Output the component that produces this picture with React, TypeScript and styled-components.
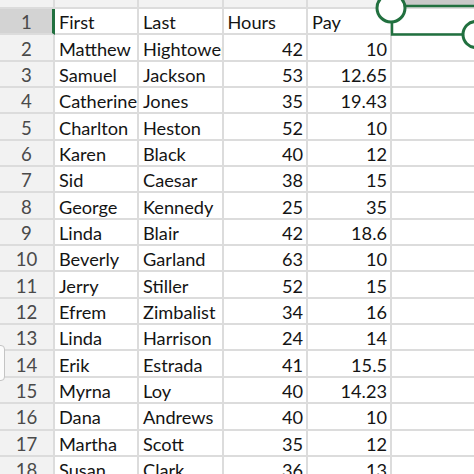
import React from "react";
import styled, { createGlobalStyle } from "styled-components";

const Global = createGlobalStyle`
  html, body { margin: 0; padding: 0; background: #ffffff; overflow: hidden; }
  body { font-family: "Lato", "Open Sans", sans-serif; }
`;

const LINE = "#dcdcdc";
const GREEN = "#21703f";

const Sheet = styled.div`
  position: relative;
  width: 474px;
  height: 474px;
  overflow: hidden;
  background: #fff;
`;

const Grid = styled.div`
  display: grid;
  grid-template-columns: 55px 84px 84.5px 84.5px 84px 100px;
  grid-auto-rows: 26.35px;
  grid-template-rows: 9px;
`;

const HeaderCell = styled.div<{ $selected?: boolean }>`
  box-sizing: border-box;
  background: ${(p) => (p.$selected ? "#c9c9c9" : "#f2f2f2")};
  border-right: 2px solid ${LINE};
  border-bottom: 2px solid ${LINE};
`;

const RowHead = styled.div<{ $selected?: boolean }>`
  box-sizing: border-box;
  position: relative;
  display: flex;
  align-items: center;
  justify-content: center;
  padding-top: 2px;
  background: ${(p) => (p.$selected ? "#d3d3d3" : "#f2f2f2")};
  border-right: 2px solid ${(p) => (p.$selected ? GREEN : LINE)};
  border-bottom: 2px solid ${LINE};
  color: #4a4a4a;
  font-size: 18.6px;
  ${(p) => (p.$selected ? "border-right-width: 3px; padding-left: 1px;" : "")}
`;

const Cell = styled.div<{ $num?: boolean }>`
  box-sizing: border-box;
  display: flex;
  align-items: center;
  justify-content: ${(p) => (p.$num ? "flex-end" : "flex-start")};
  padding: 2px ${(p) => (p.$num ? "3px" : "0")} 0 ${(p) => (p.$num ? "0" : "4px")};
  border-right: 2px solid ${LINE};
  border-bottom: 2px solid ${LINE};
  color: #141414;
  font-size: 18.2px;
  white-space: nowrap;
  overflow: hidden;
`;

const Overlay = styled.svg`
  position: absolute;
  left: 0;
  top: 0;
  pointer-events: none;
`;

const SideTab = styled.div`
  position: absolute;
  left: -10px;
  top: 345px;
  width: 13px;
  height: 34px;
  background: #fbfbfb;
  border: 1px solid #c4c4c4;
  border-radius: 4px;
`;

type Row = [string, string, string, string];

const rows: Row[] = [
  ["First", "Last", "Hours", "Pay"],
  ["Matthew", "Hightower", "42", "10"],
  ["Samuel", "Jackson", "53", "12.65"],
  ["Catherine", "Jones", "35", "19.43"],
  ["Charlton", "Heston", "52", "10"],
  ["Karen", "Black", "40", "12"],
  ["Sid", "Caesar", "38", "15"],
  ["George", "Kennedy", "25", "35"],
  ["Linda", "Blair", "42", "18.6"],
  ["Beverly", "Garland", "63", "10"],
  ["Jerry", "Stiller", "52", "15"],
  ["Efrem", "Zimbalist", "34", "16"],
  ["Linda", "Harrison", "24", "14"],
  ["Erik", "Estrada", "41", "15.5"],
  ["Myrna", "Loy", "40", "14.23"],
  ["Dana", "Andrews", "40", "10"],
  ["Martha", "Scott", "35", "12"],
  ["Susan", "Clark", "36", "13"],
];

export default function App() {
  return (
    <>
      <Global />
      <Sheet>
        <Grid>
          <HeaderCell />
          <HeaderCell />
          <HeaderCell />
          <HeaderCell />
          <HeaderCell />
          <HeaderCell $selected />
          {rows.map((r, i) => (
            <React.Fragment key={i}>
              <RowHead $selected={i === 0}>{i + 1}</RowHead>
              <Cell>{r[0]}</Cell>
              <Cell>{r[1]}</Cell>
              <Cell $num={i > 0}>{r[2]}</Cell>
              <Cell $num={i > 0}>{r[3]}</Cell>
              <Cell />
            </React.Fragment>
          ))}
        </Grid>
        <SideTab />
        <Overlay width="474" height="60" viewBox="0 0 474 60">
          <line x1="392" y1="6" x2="474" y2="6" stroke={GREEN} strokeWidth="2.5" />
          <polyline
            points="392,8 392,34.5 474,34.5"
            fill="none"
            stroke={GREEN}
            strokeWidth="2.5"
          />
          <circle cx="391" cy="8" r="14" fill="#fff" stroke={GREEN} strokeWidth="3" />
          <circle cx="476" cy="34.5" r="13" fill="#fff" stroke={GREEN} strokeWidth="3" />
        </Overlay>
      </Sheet>
    </>
  );
}
